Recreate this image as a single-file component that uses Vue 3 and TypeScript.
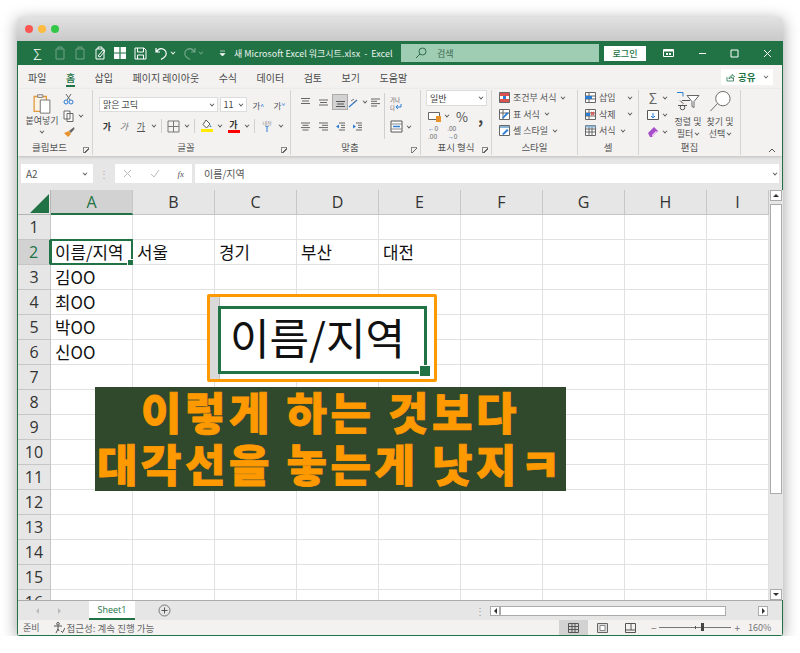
<script setup lang="ts">
const tabs = ['파일', '홈', '삽입', '페이지 레이아웃', '수식', '데이터', '검토', '보기', '도움말'];
const columns = ['A', 'B', 'C', 'D', 'E', 'F', 'G', 'H', 'I'];
const rows = Array.from({ length: 16 }, (_, i) => i + 1);

const cellText: Record<string, string> = {
  A2: '이름/지역',
  B2: '서울',
  C2: '경기',
  D2: '부산',
  E2: '대전',
  A3: '김OO',
  A4: '최OO',
  A5: '박OO',
  A6: '신OO',
};
</script>

<template>
  <div class="window">
    <div class="titlebar">
      <i class="light red"></i>
      <i class="light yellow"></i>
      <i class="light green"></i>
    </div>

    <div class="excel">
      <!-- quick access -->
      <div class="qat">
        <div class="qat-icons">
          <span class="sigma">Σ</span>
          <svg width="12" height="14" viewBox="0 0 12 14" class="dim"><path d="M2 3h8v10H2zM4 3V1h4v2" fill="none" stroke="#fff" /></svg>
          <svg width="12" height="14" viewBox="0 0 12 14" class="dim"><path d="M2 3h8v10H2zM4 3V1h4v2" fill="none" stroke="#fff" /></svg>
          <svg width="12" height="14" viewBox="0 0 12 14"><path d="M2 3h8v10H2zM4 3V1h4v2M4 10l5-6 2 1-5 6z" fill="none" stroke="#fff" /></svg>
          <svg width="12" height="12" viewBox="0 0 12 12"><path d="M0 0h5.4v5.4H0zM6.6 0H12v5.4H6.6zM0 6.6h5.4V12H0zM6.6 6.6H12V12H6.6z" fill="#fff" /></svg>
          <svg width="13" height="13" viewBox="0 0 13 13"><path d="M1 1h9l2 2v9H1zM3.500 1v4h6V1M3.500 12V8h6v4" fill="none" stroke="#fff" /></svg>
          <svg width="13" height="13" viewBox="0 0 13 13"><path d="M1 1v4h4M1.500 5C3 2 6 1 9 2.500c3 2 3 6 0 8L6 12.500" fill="none" stroke="#fff" stroke-width="1.200" /></svg>
          <i class="caret light-caret"></i>
          <svg width="13" height="13" viewBox="0 0 13 13" class="dim"><path d="M12 1v4H8M11.500 5C10 2 7 1 4 2.500c-3 2-3 6 0 8l3 2" fill="none" stroke="#fff" stroke-width="1.200" /></svg>
          <i class="caret light-caret dim"></i>
          <svg width="7" height="7" viewBox="0 0 7 7" class="customize"><path d="M1 1h5M1 3.500h5l-2.500 2.500z" fill="#fff" stroke="#fff" stroke-width=".6" /></svg>
        </div>
        <span class="doc-title">새 Microsoft Excel 워크시트.xlsx&nbsp; - &nbsp;Excel</span>
        <div class="search">
          <svg width="12" height="12" viewBox="0 0 12 12"><circle cx="7.500" cy="4.500" r="3.500" fill="none" stroke="#2f6b4a" /><path d="M5 7l-4 4" stroke="#2f6b4a" /></svg>
          <span>검색</span>
        </div>
        <button class="login">로그인</button>
        <div class="win-btns">
          <svg width="11" height="8" viewBox="0 0 11 8"><path d="M.5.500h10v7H.5z" fill="none" stroke="#fff" /><path d="M1 1h9v1.500H1zM3 4h2v2H3zM6 4h2v2H6z" fill="#fff" /></svg>
          <svg width="9" height="9" viewBox="0 0 9 9"><path d="M1 4.500h7" stroke="#fff" /></svg>
          <svg width="9" height="9" viewBox="0 0 9 9"><path d="M1 1h7v7H1z" fill="none" stroke="#fff" /></svg>
          <svg width="9" height="9" viewBox="0 0 9 9"><path d="M1 1l7 7M8 1L1 8" stroke="#fff" /></svg>
        </div>
      </div>

      <!-- tabs -->
      <div class="tabs">
        <span v-for="tab in tabs" :key="tab" class="tab" :class="{ active: tab === '홈' }">{{ tab }}</span>
        <div class="share">
          <svg width="9" height="9" viewBox="0 0 9 9"><path d="M1 4v4h6.500V5M3 6c0-2 1-3 3-3V1.500L8.500 3.500 6 5.500V4.500C4.500 4.500 3.500 5 3 6z" fill="none" stroke="#217346" stroke-width=".8" /></svg>
          <b>공유</b>
          <i class="caret"></i>
        </div>
      </div>

      <!-- ribbon -->
      <div class="ribbon">
        <section class="group g-clip">
          <div class="body clip-body">
            <div class="paste">
              <svg width="20" height="21" viewBox="0 0 22 24"><path d="M2 4h14v17H2z" fill="#fdf3e4" stroke="#e0993e" stroke-width="1.500" /><path d="M6 5V2h6v3z" fill="#eee" stroke="#777" /><path d="M9 8h11v15H9z" fill="#fff" stroke="#666" /></svg>
              <span>붙여넣기</span>
              <i class="caret"></i>
            </div>
            <div class="clip-small">
              <svg width="11" height="12" viewBox="0 0 11 12"><path d="M3 1l4 6M8 1L4 7" stroke="#666" /><circle cx="3" cy="9" r="2" fill="none" stroke="#2b7cd3" /><circle cx="8" cy="9" r="2" fill="none" stroke="#2b7cd3" /></svg>
              <div class="row-tight">
                <svg width="12" height="12" viewBox="0 0 12 12"><path d="M1 1h6v8H1zM4 3.500h6v8H4z" fill="#fff" stroke="#666" /></svg>
                <i class="caret"></i>
              </div>
              <svg width="12" height="12" viewBox="0 0 12 12"><path d="M6 5l5-4 .500 2L8 7z" fill="#666" /><path d="M1 7l5-2 2 3-3 3z" fill="#e8912d" /></svg>
            </div>
          </div>
          <footer>클립보드</footer>
          <i class="launcher"></i>
        </section>

        <section class="group g-font">
          <div class="body font-body">
            <div class="font-row">
              <div class="select name-select">맑은 고딕<i class="caret"></i></div>
              <div class="select size-select">11<i class="caret"></i></div>
              <span class="grow">가<em class="up">^</em></span>
              <span class="grow">가<em class="up">ˇ</em></span>
            </div>
            <div class="font-row second">
              <span class="fmt bold">가</span>
              <span class="fmt ital">가</span>
              <span class="fmt under">가</span>
              <i class="caret"></i>
              <i class="vsep"></i>
              <svg width="13" height="13" viewBox="0 0 13 13"><path d="M1 1h11v11H1zM6.500 1v11M1 6.500h11" fill="none" stroke="#777" /></svg>
              <i class="caret"></i>
              <i class="vsep"></i>
              <div class="colored">
                <svg width="11" height="9" viewBox="0 0 11 9"><path d="M5 0l4 4-3.500 4L2 4.500z" fill="#fff" stroke="#555" /><path d="M9.500 5l1 2h-2z" fill="#2b7cd3" /></svg>
                <i class="bar yellow-bar"></i>
              </div>
              <i class="caret"></i>
              <div class="colored">
                <span class="fmt bold color-letter">가</span>
                <i class="bar red-bar"></i>
              </div>
              <i class="caret"></i>
              <i class="vsep"></i>
              <div class="ruby">내천<svg width="6" height="6" viewBox="0 0 6 6"><path d="M1 0h4M3 0v6" stroke="#2b7cd3" /></svg></div>
              <i class="caret"></i>
            </div>
          </div>
          <footer>글꼴</footer>
          <i class="launcher"></i>
        </section>

        <section class="group g-align">
          <div class="body align-body">
            <div class="align-grid">
              <svg class="lines" viewBox="0 0 11 11"><path d="M1 1.500h9M2 4h7M1 6.500h9" stroke="#666" /></svg>
              <svg class="lines" viewBox="0 0 11 11"><path d="M1 3h9M2 5.500h7M1 8h9" stroke="#666" /></svg>
              <span class="picked"><svg class="lines" viewBox="0 0 11 11"><path d="M1 4.500h9M2 7h7M1 9.500h9" stroke="#555" /></svg></span>
              <div class="row-tight">
                <svg class="lines" viewBox="0 0 11 11"><path d="M1 10l8-7" stroke="#2b7cd3" stroke-width="1.200" /><path d="M3 4l3-2M5 6l3-2" stroke="#777" /></svg>
                <i class="caret"></i>
              </div>
              <span class="blank"></span>
              <svg class="lines" viewBox="0 0 11 11"><path d="M1 2h9M1 4.300h6M1 6.600h9M1 9h6" stroke="#666" /></svg>
              <svg class="lines" viewBox="0 0 11 11"><path d="M1 2h9M2.500 4.300h6M1 6.600h9M2.500 9h6" stroke="#666" /></svg>
              <svg class="lines" viewBox="0 0 11 11"><path d="M1 2h9M4 4.300h6M1 6.600h9M4 9h6" stroke="#666" /></svg>
              <svg class="lines" viewBox="0 0 11 11"><path d="M4 2h6M6 4.300h4M6 6.600h4M4 9h6" stroke="#666" /><path d="M1 5.500l3-2v4z" fill="#2b7cd3" /></svg>
              <svg class="lines" viewBox="0 0 11 11"><path d="M4 2h6M6 4.300h4M6 6.600h4M4 9h6" stroke="#666" /><path d="M4 5.500l-3-2v4z" fill="#2b7cd3" /></svg>
            </div>
            <i class="vsep tall"></i>
            <div class="wrap-col">
              <div class="wrap-text">가나<br />다<svg width="7" height="6" viewBox="0 0 7 6"><path d="M6 0v3H1M3 1L1 3l2 2" fill="none" stroke="#2b7cd3" /></svg></div>
              <div class="row-tight">
                <svg width="13" height="13" viewBox="0 0 13 13"><path d="M1 1h11v11H1z" fill="#fff" stroke="#555" /><path d="M1 4h11M1 9h11" stroke="#888" /><path d="M3 6.500h7" stroke="#2b7cd3" stroke-width="1.500" /></svg>
                <i class="caret"></i>
              </div>
            </div>
          </div>
          <footer>맞춤</footer>
          <i class="launcher"></i>
        </section>

        <section class="group g-number">
          <div class="body number-body">
            <div class="select num-select">일반<i class="caret"></i></div>
            <div class="num-row">
              <svg width="13" height="11" viewBox="0 0 13 11"><path d="M.5 1.500h11v7H.5z" fill="#fff" stroke="#666" /><path d="M8 5h5v6H8z" fill="#e8912d" /></svg>
              <i class="caret"></i>
              <span class="percent">%</span>
              <span class="comma">,</span>
            </div>
            <div class="num-row decimals">
              <span class="dec"><em>←</em>0<br />.00</span>
              <span class="dec">.00<br /><em>→</em>0</span>
            </div>
          </div>
          <footer>표시 형식</footer>
          <i class="launcher"></i>
        </section>

        <section class="group g-style">
          <div class="body list-body">
            <div class="list-item">
              <svg width="11" height="11" viewBox="0 0 11 11"><path d="M.5.500h10v10H.5z" fill="#fff" stroke="#666" /><path d="M1 1h9v3H1z" fill="#d9534f" /><path d="M4 4h3v3H4z" fill="#2b7cd3" /><path d="M1 7h9v3H1z" fill="#d9534f" /></svg>
              <span>조건부 서식</span><i class="caret"></i>
            </div>
            <div class="list-item">
              <svg width="11" height="11" viewBox="0 0 11 11"><path d="M.5.500h10v10H.5zM.5 4h10M4 .500v10" fill="#fff" stroke="#666" /><path d="M3 9l5-6 1.500 1.500-5 5z" fill="#2b7cd3" /></svg>
              <span>표 서식</span><i class="caret"></i>
            </div>
            <div class="list-item">
              <svg width="11" height="11" viewBox="0 0 11 11"><path d="M.5.500h10v10H.5z" fill="#fff" stroke="#666" /><path d="M1 1h9v2H1z" fill="#8ab4d8" /><path d="M3 9l5-5 1.500 1.500-5 4.500z" fill="#2b7cd3" /></svg>
              <span>셀 스타일</span><i class="caret"></i>
            </div>
          </div>
          <footer>스타일</footer>
        </section>

        <section class="group g-cell">
          <div class="body list-body">
            <div class="list-item">
              <svg width="11" height="11" viewBox="0 0 11 11"><path d="M.5.500h10v10H.5zM.5 4h10M.5 7h10M4 .500v10" fill="#fff" stroke="#666" /><path d="M0 4h7v3H0z" fill="#2b7cd3" /></svg>
              <span>삽입</span><i class="caret spaced"></i>
            </div>
            <div class="list-item">
              <svg width="11" height="11" viewBox="0 0 11 11"><path d="M.5.500h10v10H.5zM.5 4h10M.5 7h10M4 .500v10" fill="#fff" stroke="#666" /><path d="M6 3l3 3M9 3L6 6" stroke="#d9534f" stroke-width="1.300" /><path d="M1 4h4v3H1z" fill="#2b7cd3" /></svg>
              <span>삭제</span><i class="caret spaced"></i>
            </div>
            <div class="list-item">
              <svg width="11" height="11" viewBox="0 0 11 11"><path d="M.5.500h10v10H.5zM.5 4h10M.5 7h10M4 .500v10M7 .500v10" fill="#fff" stroke="#666" /><path d="M.5.500h10v2H.5z" fill="#8ab4d8" /></svg>
              <span>서식</span><i class="caret"></i>
            </div>
          </div>
          <footer>셀</footer>
        </section>

        <section class="group g-edit">
          <div class="body edit-body">
            <div class="edit-small">
              <div class="row-tight"><span class="sum">Σ</span><i class="caret"></i></div>
              <div class="row-tight">
                <svg width="12" height="12" viewBox="0 0 12 12"><path d="M.5 1.500h11v9H.5z" fill="#fff" stroke="#555" /><path d="M6 4v5M4 7l2 2 2-2" fill="none" stroke="#2b7cd3" /></svg>
                <i class="caret"></i>
              </div>
              <div class="row-tight">
                <svg width="12" height="12" viewBox="0 0 12 12"><path d="M1 7l6-6 4 4-6 6H3z" fill="#a64dc9" /><path d="M5 9l4-4 1 1-4.500 4.500z" fill="#f3d9f7" /></svg>
                <i class="caret"></i>
              </div>
            </div>
            <div class="big-btn sort">
              <svg width="24" height="20" viewBox="0 0 24 20"><path d="M1 1h6v4" fill="none" stroke="#2b7cd3" /><path d="M6 9h8M2 14h9" stroke="#555" /><path d="M4 9c1.500 2 2.500 2 3.500 3" fill="none" stroke="#555" /><circle cx="6.500" cy="16" r="2.300" fill="none" stroke="#555" /><path d="M11 4h12l-5 6v6l-2-1v-5z" fill="#fff" stroke="#666" /></svg>
              <span>정렬 및<br />필터 <i class="caret"></i></span>
            </div>
            <div class="big-btn find">
              <svg width="23" height="24" viewBox="0 0 23 24"><circle cx="14" cy="9" r="7.500" fill="#fff" stroke="#666" /><path d="M8.500 14L1 22" stroke="#666" /></svg>
              <span>찾기 및<br />선택 <i class="caret"></i></span>
            </div>
          </div>
          <footer>편집</footer>
        </section>

        <div class="collapse"><svg width="8" height="5" viewBox="0 0 8 5"><path d="M1 4l3-3 3 3" fill="none" stroke="#555" /></svg></div>
      </div>

      <!-- formula bar -->
      <div class="formula">
        <div class="name-box">A2<i class="caret"></i></div>
        <span class="grip">⋮</span>
        <div class="fx-box">
          <svg width="9" height="9" viewBox="0 0 9 9"><path d="M1 1l7 7M8 1L1 8" stroke="#bbb" /></svg>
          <svg width="10" height="9" viewBox="0 0 10 9"><path d="M1 5l3 3 5-7" fill="none" stroke="#bbb" /></svg>
          <em>fx</em>
        </div>
        <div class="formula-input">이름/지역<i class="caret"></i></div>
      </div>

      <!-- sheet -->
      <div class="sheet">
        <div class="grid">
          <div class="corner"><i></i></div>
          <div v-for="col in columns" :key="col" class="col-head" :class="{ on: col === 'A' }">{{ col }}</div>
          <template v-for="row in rows" :key="row">
            <div class="row-head" :class="{ on: row === 2 }">{{ row }}</div>
            <div
              v-for="col in columns"
              :key="col + row"
              class="cell"
              :class="{ selected: col === 'A' && row === 2 }"
            >{{ cellText[col + row] }}</div>
          </template>
        </div>

        <div class="vscroll">
          <span class="v-btn"><i class="tri up-tri"></i></span>
          <span class="v-thumb"></span>
          <span class="v-fill"></span>
          <span class="v-btn"><i class="tri down-tri"></i></span>
        </div>

        <div class="callout">
          <div class="callout-head"></div>
          <div class="callout-cell">이름/지역</div>
        </div>

        <div class="banner">
          <div>이렇게 하는 것보다</div>
          <div>대각선을 놓는게 낫지ㅋ</div>
        </div>
      </div>

      <!-- sheet tabs -->
      <div class="sheet-tabs">
        <div class="tab-nav"><i class="tri left-tri"></i><i class="tri right-tri"></i></div>
        <div class="sheet-tab">Sheet1</div>
        <svg class="add" width="13" height="13" viewBox="0 0 13 13"><circle cx="6.500" cy="6.500" r="5.500" fill="none" stroke="#777" /><path d="M3.500 6.500h6M6.500 3.500v6" stroke="#555" /></svg>
        <span class="tab-grip">⋮</span>
        <div class="hscroll">
          <span class="h-btn"><i class="tri left-tri dark"></i></span>
          <span class="h-thumb"></span>
          <span class="h-fill"></span>
          <span class="h-btn"><i class="tri right-tri dark"></i></span>
        </div>
      </div>

      <!-- status bar -->
      <div class="status">
        <span class="ready">준비</span>
        <svg width="11" height="11" viewBox="0 0 11 11"><circle cx="4" cy="1.800" r="1.300" fill="none" stroke="#555" /><path d="M0 4h8M4 4v3M4 7l-2 4M4 7l1 2M7 9l1.500 1.500L11 6" fill="none" stroke="#555" /></svg>
        <span class="a11y">접근성: 계속 진행 가능</span>
        <div class="views">
          <span class="view on"><svg width="11" height="10" viewBox="0 0 11 10"><path d="M.5.500h10v9H.5zM.5 3.500h10M.5 6.500h10M4 .500v9M7 .500v9" fill="none" stroke="#555" /></svg></span>
          <span class="view"><svg width="11" height="10" viewBox="0 0 11 10"><path d="M.5.500h10v9H.5z" fill="#ddd" stroke="#666" /><path d="M3 2.500h5v5H3z" fill="#fff" stroke="#888" /></svg></span>
          <span class="view"><svg width="11" height="10" viewBox="0 0 11 10"><path d="M.5.500h10v9H.5zM.5 7h10M6 .500V7" fill="none" stroke="#555" /></svg></span>
        </div>
        <div class="zoom">
          <span>−</span>
          <div class="slider"><i class="tick"></i><i class="knob"></i></div>
          <span>+</span>
        </div>
        <span class="percent-text">160%</span>
      </div>
    </div>
  </div>
</template>

<style>
html,
body {
  margin: 0;
  background: #fff;
}
</style>

<style scoped>
* {
  box-sizing: border-box;
}

i,
em {
  font-style: normal;
}

.window {
  width: 766px;
  height: 619px;
  margin: 17px 0 0 17px;
  border-radius: 4px 4px 3px 3px;
  box-shadow: 0 3px 16px rgba(0, 0, 0, 0.38);
  font-family: 'Noto Sans CJK KR', 'Noto Sans', sans-serif;
  color: #444;
  overflow: hidden;
}

.titlebar {
  height: 24px;
  display: flex;
  align-items: center;
  gap: 5px;
  padding-left: 8px;
  background: linear-gradient(#e2e2e2, #c9c9c9);
}

.light {
  width: 8px;
  height: 8px;
  border-radius: 50%;
}
.light.red { background: #fc5753; }
.light.yellow { background: #fdbc40; }
.light.green { background: #33c748; }

.excel {
  height: 595px;
  display: flex;
  flex-direction: column;
  border: 1px solid #217346;
  border-top: 0;
  background: #e6e6e6;
}

/* title row */
.qat {
  height: 24px;
  flex: none;
  margin: 0 -1px;
  display: flex;
  align-items: center;
  background: #217346;
  color: #fff;
  font-size: 9px;
}

.qat-icons {
  width: 217px;
  display: flex;
  align-items: center;
  gap: 8px;
  padding-left: 16px;
}

.sigma {
  font-size: 15px;
  font-weight: 300;
  line-height: 1;
  width: 12px;
  margin-right: 1px;
}

.dim { opacity: 0.35; }
.customize { margin-left: 8px; }

.doc-title {
  width: 167px;
  white-space: nowrap;
  color: #e8f2ec;
}

.search {
  width: 198px;
  height: 18px;
  display: flex;
  align-items: center;
  gap: 10px;
  padding-left: 14px;
  background: #9fcdb3;
  color: #3d6b52;
  font-size: 9px;
}

.login {
  width: 42px;
  height: 15px;
  margin-left: 5px;
  padding: 0;
  border: 0;
  background: #fff;
  color: #217346;
  font: 500 9px 'Noto Sans CJK KR', sans-serif;
}

.win-btns {
  flex: 1;
  display: flex;
  align-items: center;
  justify-content: space-between;
  padding: 0 11px 0 17px;
}

/* tabs */
.tabs {
  height: 24px;
  flex: none;
  display: flex;
  align-items: center;
  padding-left: 10px;
  gap: 19.5px;
  background: #f3f2f1;
  font-size: 10px;
  color: #4a4a4a;
}

.tab {
  position: relative;
  white-space: nowrap;
}

.tab.active {
  color: #217346;
  font-weight: 500;
}

.tab.active::after {
  content: '';
  position: absolute;
  left: 0;
  right: 0;
  bottom: -2px;
  height: 2px;
  background: #217346;
}

.share {
  width: 52px;
  height: 16px;
  margin-left: auto;
  margin-right: 9px;
  display: flex;
  align-items: center;
  gap: 3px;
  padding-left: 5px;
  background: #fff;
  color: #217346;
  font-size: 9.5px;
}

.share .caret { margin-left: 6px; border-color: #666; }

.caret {
  flex: none;
  display: inline-block;
  width: 4px;
  height: 4px;
  border-right: 1px solid #555;
  border-bottom: 1px solid #555;
  transform: translateY(-1px) rotate(45deg) scale(0.85);
}

.light-caret { border-color: #fff; margin-left: -5px; }

/* ribbon */
.ribbon {
  height: 67px;
  flex: none;
  display: flex;
  background: #f3f2f1;
  box-shadow: 0 1px 3px rgba(0, 0, 0, 0.18);
  font-size: 9px;
  color: #555;
  position: relative;
}

.group {
  position: relative;
  display: flex;
  flex-direction: column;
  margin: 1px 0 1px;
  border-right: 1px solid #d4d4d4;
}

.group footer {
  height: 15px;
  flex: none;
  text-align: center;
  font-size: 9.5px;
  line-height: 15px;
  color: #555;
}

.g-clip footer,
.g-font footer,
.g-align footer {
  padding-right: 11px;
}

.body {
  flex: 1;
  min-height: 0;
}

.launcher {
  position: absolute;
  right: 3px;
  bottom: 2px;
  width: 6px;
  height: 6px;
  border-left: 1px solid #888;
  border-top: 1px solid #888;
  background: linear-gradient(135deg, transparent 45%, #666 45%, #666 60%, transparent 60%);
}

.row-tight {
  display: flex;
  align-items: center;
  gap: 4px;
}

.g-clip { width: 75px; }
.g-font { width: 198px; }
.g-align { width: 130px; }
.g-number { width: 71px; }
.g-style { width: 86px; }
.g-cell { width: 61px; }
.g-edit { width: 102px; }

.clip-body {
  display: flex;
  gap: 4px;
  padding: 3px 0 0 7px;
}

.paste {
  width: 34px;
  display: flex;
  flex-direction: column;
  align-items: center;
  font-size: 9px;
  white-space: nowrap;
}

.paste span { margin-top: 1px; line-height: 12px; }
.paste .caret { margin-top: 3px; }

.clip-small {
  display: flex;
  flex-direction: column;
  gap: 4.5px;
}

.font-body { padding: 7px 0 0 6px; }

.font-row {
  display: flex;
  align-items: center;
}

.select {
  height: 15px;
  display: flex;
  align-items: center;
  justify-content: space-between;
  padding: 0 3px;
  background: #fff;
  border: 1px solid #dcdcdc;
  font-size: 9px;
  color: #444;
}

.name-select { width: 123px; }
.size-select { width: 28px; margin-left: 2px; margin-right: 1px; }

.grow {
  width: 22px;
  text-align: center;
  font-size: 8.5px;
  white-space: nowrap;
}
.up { color: #2b7cd3; font-size: 7px; }

.second {
  margin-top: 7px;
  gap: 5px;
  padding-left: 2px;
  height: 14px;
}

.fmt {
  width: 12px;
  text-align: center;
  font-size: 9px;
  color: #555;
}
.bold { font-weight: 700; color: #333; }
.ital { font-style: italic; color: #777; }
.under { text-decoration: underline; }

.vsep {
  flex: none;
  width: 1px;
  height: 14px;
  background: #d0d0d0;
}
.vsep.tall { height: 46px; margin: 3px 5px 0 0; }

.colored {
  width: 13px;
  display: flex;
  flex-direction: column;
  align-items: center;
  line-height: 10px;
}

.bar { width: 12px; height: 3px; }
.yellow-bar { background: #ffea00; }
.red-bar { background: #f00; }
.color-letter { line-height: 10px; }

.ruby {
  width: 14px;
  font-size: 5px;
  line-height: 6px;
  color: #888;
  text-align: center;
}

.align-body {
  display: flex;
  padding-left: 6px;
}

.align-grid {
  width: 87px;
  display: grid;
  grid-template-columns: repeat(5, 17.4px);
  grid-template-rows: 24px 24px;
  align-items: center;
  justify-items: center;
}

.lines { width: 11px; height: 11px; }

.picked {
  width: 16px;
  height: 16px;
  display: flex;
  align-items: center;
  justify-content: center;
  background: #d2d2d2;
  border: 1px solid #ababab;
}

.blank { display: none; }

.wrap-col {
  display: flex;
  flex-direction: column;
  gap: 6px;
  padding-top: 6px;
}

.wrap-text {
  font-size: 5.5px;
  line-height: 8px;
  height: 18px;
  color: #555;
}

.number-body { padding: 0 0 0 5px; }

.num-select {
  width: 61px;
  height: 16px;
  font-size: 9px;
}

.num-row {
  display: flex;
  align-items: center;
  gap: 4px;
  height: 18px;
  margin-top: 1px;
  padding-left: 2px;
}

.percent { font-size: 13px; margin-left: 3px; color: #555; line-height: 1; }
.comma { font-size: 16px; font-weight: 700; margin-left: 6px; line-height: 12px; color: #444; }

.decimals { gap: 9px; margin-top: -1px; }

.dec {
  font-family: 'Liberation Sans', sans-serif;
  font-size: 6.5px;
  line-height: 8px;
  color: #666;
  white-space: nowrap;
}
.dec em { color: #2b7cd3; }

.list-body {
  display: flex;
  flex-direction: column;
  gap: 3.500px;
  padding: 1px 0 0 7px;
}

.list-item {
  height: 13px;
  display: flex;
  align-items: center;
  gap: 3px;
  font-size: 9px;
  white-space: nowrap;
  color: #555;
}

.list-item .caret { margin-left: 2px; }
.list-item .caret.spaced { margin-left: 9px; }

.edit-body {
  display: flex;
  padding: 0 0 0 8px;
}

.edit-small {
  width: 25px;
  display: flex;
  flex-direction: column;
  gap: 3px;
  padding-top: 1px;
}

.edit-small .row-tight { height: 14px; }

.sum { width: 12px; font-size: 14px; line-height: 14px; color: #666; text-align: center; }

.big-btn {
  width: 32px;
  display: flex;
  flex-direction: column;
  align-items: center;
  text-align: center;
  white-space: nowrap;
  font-size: 9px;
  line-height: 12px;
  color: #555;
}

.big-btn svg { height: 24px; margin-bottom: 3px; }
.big-btn .caret { transform: translateY(-2px) rotate(45deg) scale(0.85); }

.collapse {
  position: absolute;
  right: 6px;
  bottom: 2px;
  line-height: 1;
}

/* formula bar */
.formula {
  height: 34px;
  flex: none;
  display: flex;
  align-items: flex-start;
  padding: 8px 3px 0;
  background: #e6e6e6;
  font-size: 10px;
}

.name-box {
  width: 72px;
  height: 19px;
  display: flex;
  align-items: center;
  justify-content: space-between;
  padding: 0 6px 0 5px;
  background: #fff;
  color: #555;
  font-size: 10px;
}

.grip {
  width: 22px;
  text-align: center;
  line-height: 19px;
  color: #aaa;
  font-size: 10px;
}

.fx-box {
  width: 77px;
  height: 19px;
  display: flex;
  align-items: center;
  justify-content: space-between;
  padding: 0 8px;
  background: #fff;
}

.fx-box em {
  font: italic 9px 'Liberation Serif', serif;
  color: #555;
}

.formula-input {
  flex: 1;
  height: 19px;
  margin-left: 3px;
  display: flex;
  align-items: center;
  justify-content: space-between;
  padding: 0 2px 0 9px;
  background: #fff;
  font-size: 10px;
  color: #555;
}

/* sheet */
.sheet {
  position: relative;
  height: 410px;
  flex: none;
  display: flex;
}

.grid {
  width: 751px;
  height: 410px;
  flex: none;
  overflow: hidden;
  display: grid;
  grid-template-columns: 33px repeat(8, 82px) 62px;
  grid-template-rows: 25px repeat(16, 25px);
  background: #fff;
}

.corner {
  background: #e6e6e6;
  border-right: 1px solid #b5b5b5;
  border-bottom: 1px solid #b5b5b5;
  position: relative;
}

.corner i {
  position: absolute;
  right: 1px;
  bottom: 1px;
  width: 0;
  height: 0;
  border-left: 19px solid transparent;
  border-bottom: 19px solid #217346;
}

.col-head,
.row-head {
  display: flex;
  align-items: center;
  justify-content: center;
  background: #e6e6e6;
  font-family: 'Open Sans', 'Noto Sans', sans-serif;
  font-size: 16px;
  color: #333;
  border-right: 1px solid #c6c6c6;
  border-bottom: 1px solid #c6c6c6;
}

.col-head.on,
.row-head.on {
  background: #d2d2d2;
  color: #217346;
}

.col-head.on { border-bottom: 2px solid #217346; }
.row-head.on { border-right: 2px solid #217346; }

.cell {
  position: relative;
  display: flex;
  align-items: center;
  padding: 0 0 0 4px;
  border-right: 1px solid #e1e1e1;
  border-bottom: 1px solid #e1e1e1;
  font-size: 16.8px;
  color: #111;
  white-space: nowrap;
  min-width: 0;
}

.cell.selected {
  border: 2px solid #217346;
  margin: -1px 0 0 -1px;
  padding-left: 3px;
}

.cell.selected::after {
  content: '';
  position: absolute;
  right: -3px;
  bottom: -3px;
  width: 5px;
  height: 5px;
  background: #217346;
  border: 1px solid #fff;
}

.vscroll {
  flex: 1;
  display: flex;
  flex-direction: column;
  align-items: center;
  padding: 0 1px;
  background: #e6e6e6;
}

.v-btn {
  width: 12px;
  height: 11px;
  flex: none;
  display: flex;
  align-items: center;
  justify-content: center;
  background: #fff;
  border: 1px solid #ababab;
}

.v-thumb {
  width: 12px;
  height: 290px;
  margin-top: 3px;
  flex: none;
  background: #fff;
  border: 1px solid #ababab;
}

.v-fill { flex: 1; }

.tri {
  display: inline-block;
  width: 0;
  height: 0;
  border: 3px solid transparent;
}
.up-tri { border-bottom-color: #333; margin-top: -3px; }
.down-tri { border-top-color: #333; margin-top: 3px; }
.left-tri { border-right-color: #bbb; margin-left: -3px; }
.right-tri { border-left-color: #bbb; margin-right: -3px; }
.left-tri.dark { border-right-color: #333; }
.right-tri.dark { border-left-color: #333; }

.callout {
  position: absolute;
  left: 189px;
  top: 104px;
  width: 230px;
  height: 88px;
  display: flex;
  padding: 9px 6px 5px 0;
  border: 3px solid #f90;
  border-radius: 2px;
  background: #fff;
}

.callout-head {
  position: absolute;
  left: 0;
  top: 0;
  bottom: 0;
  width: 10px;
  background: #d9d9d9;
  border-right: 1px solid #bdbdbd;
}

.callout-cell {
  position: relative;
  width: 209px;
  height: 68px;
  margin-left: 8px;
  padding: 0 10px 9px 0;
  display: flex;
  align-items: center;
  justify-content: center;
  border: 3px solid #217346;
  background: #fff;
  font-size: 43px;
  color: #111;
  white-space: nowrap;
}

.callout-cell::after {
  content: '';
  position: absolute;
  right: -7px;
  bottom: -6px;
  width: 10px;
  height: 10px;
  background: #217346;
  border: 1px solid #fff;
}

.banner {
  position: absolute;
  left: 77px;
  top: 197px;
  width: 471px;
  height: 104px;
  padding-bottom: 4px;
  display: flex;
  flex-direction: column;
  align-items: center;
  justify-content: center;
  background: #30482c;
  color: #f90;
  font-size: 44px;
  font-weight: 900;
  line-height: 52px;
  letter-spacing: 3.5px;
  white-space: nowrap;
  -webkit-text-stroke: 0.8px #f90;
}

/* sheet tabs */
.sheet-tabs {
  height: 20px;
  flex: none;
  display: flex;
  align-items: center;
  border-top: 1px solid #ababab;
  background: #e6e6e6;
}

.tab-nav {
  width: 71px;
  display: flex;
  justify-content: space-between;
  padding: 0 28px 0 18px;
}

.sheet-tab {
  width: 46px;
  height: 19px;
  display: flex;
  align-items: center;
  justify-content: center;
  background: #fff;
  border-bottom: 2px solid #217346;
  font-family: 'Open Sans', sans-serif;
  font-size: 9px;
  color: #217346;
}

.add { margin-left: 23px; }

.tab-grip {
  margin-left: 304px;
  width: 15px;
  color: #999;
  font-size: 10px;
}

.hscroll {
  flex: 1;
  display: flex;
  align-items: center;
  padding-right: 14px;
}

.h-btn {
  width: 10px;
  height: 10px;
  flex: none;
  display: flex;
  align-items: center;
  justify-content: center;
  background: #fff;
  border: 1px solid #ababab;
}

.h-thumb {
  width: 226px;
  height: 10px;
  background: #fff;
  border: 1px solid #ababab;
}

.h-fill { flex: 1; }

/* status bar */
.status {
  flex: 1;
  display: flex;
  align-items: center;
  background: #f3f2f1;
  font-size: 9px;
  color: #666;
}

.ready { margin: 0 14px 0 5px; }
.a11y { margin-left: 2px; font-size: 9.5px; }

.views {
  margin-left: auto;
  display: flex;
  height: 100%;
}

.view {
  width: 28.500px;
  display: flex;
  align-items: center;
  justify-content: center;
}

.view.on { background: #d2d2d2; }

.zoom {
  display: flex;
  align-items: center;
  gap: 3px;
  margin-left: 6px;
  font-size: 10px;
  color: #777;
}

.slider {
  position: relative;
  width: 72px;
  height: 1px;
  background: #777;
}

.tick {
  position: absolute;
  left: 36px;
  top: -1px;
  width: 1px;
  height: 3px;
  background: #555;
}

.knob {
  position: absolute;
  left: 42px;
  top: -4px;
  width: 3px;
  height: 8px;
  background: #444;
}

.percent-text {
  width: 34px;
  margin-left: 8px;
  color: #777;
  font-size: 9px;
}
</style>
